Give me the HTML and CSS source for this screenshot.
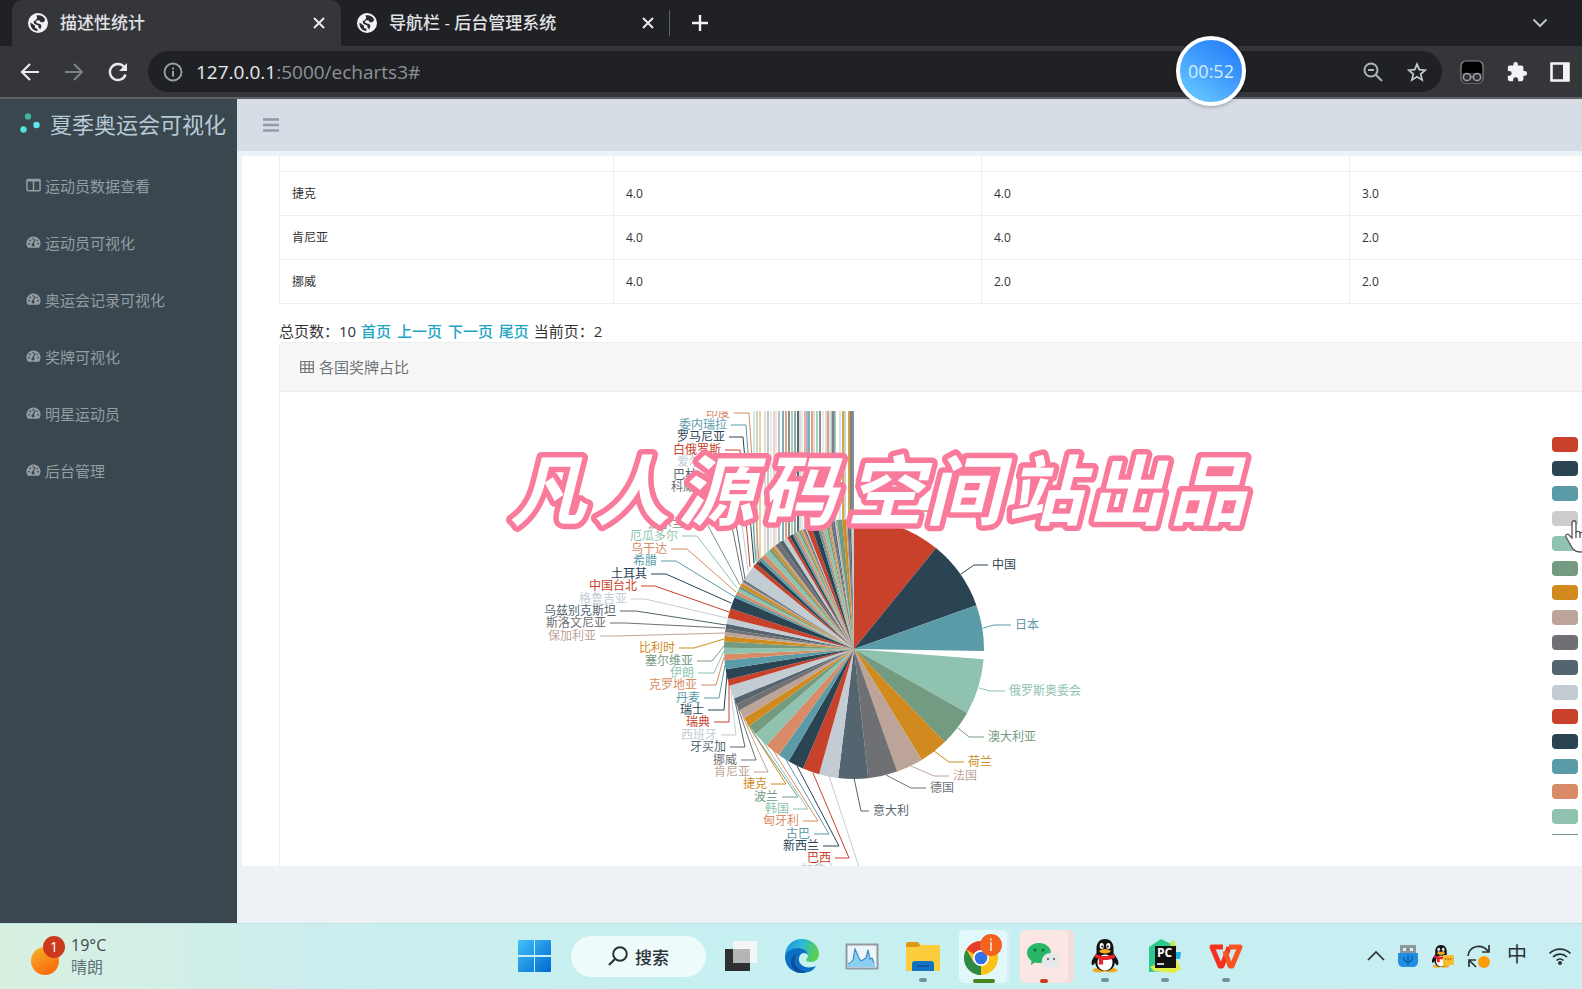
FILE: index.html
```
<!DOCTYPE html>
<html lang="zh-cn">
<head>
    <meta charset="UTF-8">
    <meta name="viewport" content="width=device-width, initial-scale=1.0">
    <title>描述性统计</title>
    <link rel="stylesheet" href="styles.css">
</head>
<body>
    <svg class="defs" width="0" height="0" aria-hidden="true">
        <symbol id="i-globe" viewBox="0 0 20 20">
            <circle cx="10" cy="10" r="10" fill="#f1f3f4"/>
            <path d="M2.5 9.5l4.500 3.200v2.300l2.400.8v2.400C5 17.700 1.800 14 2.500 9.500z" fill="#2b2c30"/>
            <path d="M8.500 2.500c4-1 7.500 1 8.800 4.500l-2 2.200h-2.500l-1.300-1.700-2.500-.3-1.300 1.800 2 1.500 2.600.5 1.200 2-1.300 3.500-1.700-2.300-.2-1.700-3.800-1.500-1-2.500 2.500-1.500 1.200-2.200z" fill="#2b2c30"/>
        </symbol>
        <symbol id="i-close" viewBox="0 0 12 12">
            <path d="M1 1l10 10M11 1L1 11" fill="none" stroke="#e8eaed" stroke-width="2"/>
        </symbol>
        <symbol id="i-dash" viewBox="0 0 16 14">
            <path d="M8 1a7.500 7.500 0 0 0-6.400 11.400c.2.400.5.600.9.600h11c.4 0 .7-.2.900-.6A7.500 7.500 0 0 0 8 1z" fill="currentColor"/>
            <path d="M7.300 9.500L9.800 4" stroke="#3a474f" stroke-width="1.200"/>
            <circle cx="7.500" cy="10" r="1.700" fill="#3a474f"/>
            <circle cx="3.200" cy="8.800" r=".9" fill="#3a474f"/>
            <circle cx="4.500" cy="5.300" r=".9" fill="#3a474f"/>
            <circle cx="7.700" cy="3.500" r=".9" fill="#3a474f"/>
            <circle cx="12.800" cy="8.800" r=".9" fill="#3a474f"/>
            <circle cx="11.800" cy="5.300" r=".8" fill="#3a474f"/>
        </symbol>
        <symbol id="i-qq" viewBox="0 0 30 36">
            <ellipse cx="9" cy="33" rx="7" ry="2.500" fill="#f5a91c"/>
            <ellipse cx="21" cy="33" rx="7" ry="2.500" fill="#f5a91c"/>
            <path d="M15 0c6 0 9 4.500 9 10v5c3 4 6 8 5 12-1 2-2.500 0-3.500-2C24.500 31 21 34 15 34S5.500 31 4.500 25C3.500 27 2 29 1 27c-1-4 2-8 5-12v-5c0-5.500 3-10 9-10z" fill="#111"/>
            <ellipse cx="15" cy="25" rx="8" ry="8.500" fill="#fff"/>
            <ellipse cx="11.500" cy="7.500" rx="2.200" ry="3.200" fill="#fff"/>
            <ellipse cx="18.500" cy="7.500" rx="2.200" ry="3.200" fill="#fff"/>
            <circle cx="12" cy="8" r="1" fill="#111"/>
            <circle cx="18" cy="8" r="1" fill="#111"/>
            <ellipse cx="15" cy="13" rx="6" ry="2.300" fill="#f5a91c"/>
            <path d="M5 15.500c6 3.500 14 3.500 20 0l1 4c-4 2-8 3-13 2.800V27H8.500v-6L4 19.500z" fill="#e5252b"/>
        </symbol>
    </svg>

    <div class="tabs">
        <div class="tab active">
            <svg class="favicon"><use href="#i-globe"/></svg>
            <span>描述性统计</span>
            <button class="close" aria-label="关闭"><svg width="12" height="12"><use href="#i-close"/></svg></button>
        </div>
        <div class="tab">
            <svg class="favicon"><use href="#i-globe"/></svg>
            <span>导航栏 - 后台管理系统</span>
            <button class="close" aria-label="关闭"><svg width="12" height="12"><use href="#i-close"/></svg></button>
        </div>
        <button class="new-tab" aria-label="新标签页">
            <svg width="16" height="16" viewBox="0 0 16 16"><path d="M8 0v16M0 8h16" stroke="#f1f3f4" stroke-width="2.400"/></svg>
        </button>
        <button class="tab-search" aria-label="搜索标签页">
            <svg width="16" height="10" viewBox="0 0 16 10"><path d="M1.500 1.500L8 8l6.500-6.500" fill="none" stroke="#bdc1c6" stroke-width="2"/></svg>
        </button>
    </div>

    <div class="toolbar">
        <button aria-label="后退">
            <svg width="20" height="20" viewBox="0 0 20 20"><path d="M19 10H2.500M10 2l-8 8 8 8" fill="none" stroke="#e8eaed" stroke-width="2.200"/></svg>
        </button>
        <button aria-label="前进">
            <svg width="20" height="20" viewBox="0 0 20 20"><path d="M1 10h16.500M10 2l8 8-8 8" fill="none" stroke="#7d8084" stroke-width="2"/></svg>
        </button>
        <button aria-label="刷新">
            <svg width="20" height="20" viewBox="0 0 20 20"><path d="M17.500 12.500A8 8 0 1 1 16 4.800" fill="none" stroke="#e8eaed" stroke-width="2.400"/><path d="M19 1v8h-8z" fill="#e8eaed"/></svg>
        </button>
        <div class="omnibox">
            <svg width="20" height="20" viewBox="0 0 20 20"><circle cx="10" cy="10" r="8.500" fill="none" stroke="#9aa0a6" stroke-width="1.800"/><path d="M10 9v5.500M10 5.500v2" stroke="#9aa0a6" stroke-width="2"/></svg>
            <p class="url"><b>127.0.0.1</b>:5000/echarts3#</p>
            <button aria-label="缩放">
                <svg width="20" height="20" viewBox="0 0 20 20"><circle cx="8" cy="8" r="6.500" fill="none" stroke="#b0b4b8" stroke-width="2"/><path d="M5 8h6M13 13l6 6" stroke="#b0b4b8" stroke-width="2"/></svg>
            </button>
            <button aria-label="收藏">
                <svg width="20" height="20" viewBox="0 0 20 20"><path d="M10 2.200l2.300 5.500 5.900.5-4.500 3.900 1.400 5.800-5.100-3.100-5.100 3.100 1.400-5.800L1.800 8.200l5.900-.5z" fill="none" stroke="#c4c7ca" stroke-width="1.800"/></svg>
            </button>
        </div>
        <div class="extensions">
            <button aria-label="扩展">
                <svg width="24" height="24" viewBox="0 0 24 24"><rect x="1" y="1" width="22" height="22" rx="5" fill="#000" stroke="#8c8e90" stroke-width="1.200"/><path d="M1.600 13h20.800v6a4 4 0 0 1-4 4H5.600a4 4 0 0 1-4-4z" fill="#303134"/><circle cx="7" cy="17" r="3.600" fill="none" stroke="#a0a2a4" stroke-width="1.500"/><circle cx="17" cy="17" r="3.600" fill="none" stroke="#a0a2a4" stroke-width="1.500"/><path d="M10.500 17h3" stroke="#a0a2a4"/></svg>
            </button>
            <button aria-label="扩展程序">
                <svg width="22" height="22" viewBox="0 0 24 24"><path d="M20.500 11H19V7a2 2 0 0 0-2-2h-4V3.500a2.500 2.500 0 0 0-5 0V5H4a2 2 0 0 0-2 2v3.800h1.500a2.700 2.700 0 0 1 0 5.400H2V20a2 2 0 0 0 2 2h3.800v-1.500a2.700 2.700 0 0 1 5.400 0V22H17a2 2 0 0 0 2-2v-4h1.500a2.500 2.500 0 0 0 0-5z" fill="#f1f3f4"/></svg>
            </button>
            <button aria-label="侧边栏">
                <svg width="20" height="20" viewBox="0 0 20 20"><path d="M1.500 1.500h17v17h-17z" fill="none" stroke="#f1f3f4" stroke-width="2.600"/><path d="M13 1h6v18h-6z" fill="#f1f3f4"/></svg>
            </button>
        </div>
        <div class="timer">00:52</div>
    </div>

    <div class="page">
        <nav class="sidebar">
            <a class="brand" href="#">
                <svg width="20" height="20" viewBox="0 0 20 20"><circle cx="8" cy="3.500" r="3.200" fill="#3fb59a"/><circle cx="16.500" cy="12" r="3.200" fill="#5fe6ee"/><circle cx="3.500" cy="16.500" r="3.200" fill="#4fe6d8"/></svg>
                <span>夏季奥运会可视化</span>
            </a>
            <a class="nav-item" href="#">
                <svg viewBox="0 0 16 14"><path d="M2 1h12a1 1 0 0 1 1 1v10a1 1 0 0 1-1 1H2a1 1 0 0 1-1-1V2a1 1 0 0 1 1-1zM8 1v12M1 2.500h14" fill="none" stroke="currentColor" stroke-width="1.600"/></svg>
                <span>运动员数据查看</span>
            </a>
            <a class="nav-item" href="#"><svg><use href="#i-dash"/></svg><span>运动员可视化</span></a>
            <a class="nav-item" href="#"><svg><use href="#i-dash"/></svg><span>奥运会记录可视化</span></a>
            <a class="nav-item" href="#"><svg><use href="#i-dash"/></svg><span>奖牌可视化</span></a>
            <a class="nav-item" href="#"><svg><use href="#i-dash"/></svg><span>明星运动员</span></a>
            <a class="nav-item" href="#"><svg><use href="#i-dash"/></svg><span>后台管理</span></a>
        </nav>

        <div class="main">
            <header class="topbar">
                <button aria-label="菜单">
                    <svg width="16" height="14" viewBox="0 0 16 14"><path d="M0 1.500h16M0 7h16M0 12.500h16" stroke="#8c9dab" stroke-width="2.600"/></svg>
                </button>
            </header>

            <div class="panel">
                <table>
                    <colgroup><col class="name"><col><col><col></colgroup>
                    <tr class="cut"><td></td><td></td><td></td><td></td></tr>
                    <tr><td>捷克</td><td>4.0</td><td>4.0</td><td>3.0</td></tr>
                    <tr><td>肯尼亚</td><td>4.0</td><td>4.0</td><td>2.0</td></tr>
                    <tr><td>挪威</td><td>4.0</td><td>2.0</td><td>2.0</td></tr>
                </table>

                <p class="pager">总页数：10 <a href="#">首页</a> <a href="#">上一页</a> <a href="#">下一页</a> <a href="#">尾页</a> 当前页：2</p>

                <div class="card">
                    <div class="card-header">
                        <svg width="14" height="14" viewBox="0 0 14 14"><path d="M.700 1.500h12.600v11H.700zM.700 5h12.600M.700 8.700h12.600M5 1.500v11M9.200 1.500v11" fill="none" stroke="#6f7479" stroke-width="1.200"/></svg>
                        <span>各国奖牌占比</span>
                    </div>
                    <div class="card-body">
                        <svg id="chart" class="chart"></svg>
                        <ul id="legend" class="legend"></ul>
                    </div>
                </div>
            </div>
        </div>

        <svg class="watermark" width="760" height="110">
            <text x="10 94 178 261 347 426 507 588 670" y="82">凡人源码空间站出品</text>
        </svg>
        <svg class="cursor" width="28" height="34" viewBox="0 0 28 34"><path d="M7 3c0-3 4-3 4 0v9c1-1 4-1 4 1 1-1 4-1 4 1 1-1 4-1 4 2v8c0 5-3 8-8 8-6 0-8-4-10-8l-4-7c-1-3 2-4 4-1l2 2z" fill="#fff" stroke="#555" stroke-width="1.300"/><path d="M11 12v6M15 13v5M19 14v4" stroke="#555" stroke-width="1.300"/></svg>
    </div>

    <footer class="taskbar">
        <div class="weather">
            <svg width="38" height="40" viewBox="0 0 38 40">
                <defs><linearGradient id="sun" x1="0" y1="0" x2="0.600" y2="1"><stop offset="0" stop-color="#f3b52a"/><stop offset="1" stop-color="#fb6a0c"/></linearGradient></defs>
                <circle cx="15" cy="25" r="14" fill="url(#sun)"/>
                <circle cx="24" cy="11" r="11" fill="#cc3a1c"/>
                <text x="24" y="16" text-anchor="middle" font-size="14" fill="#fff">1</text>
            </svg>
            <div>
                <div>19°C</div>
                <div class="sky">晴朗</div>
            </div>
        </div>

        <button class="start" aria-label="开始">
            <svg width="33" height="32" viewBox="0 0 33 32">
                <defs><linearGradient id="win" x1="0" y1="0" x2="1" y2="1" gradientUnits="objectBoundingBox"><stop offset="0" stop-color="#41c1fb"/><stop offset="1" stop-color="#0068cf"/></linearGradient></defs>
                <path d="M1 0h15v15H0V1a1 1 0 0 1 1-1zM17 0h15a1 1 0 0 1 1 1v14H17zM0 17h16v15H1a1 1 0 0 1-1-1zM17 17h16v14a1 1 0 0 1-1 1H17z" fill="url(#win)"/>
            </svg>
        </button>
        <button class="search">
            <svg width="20" height="20" viewBox="0 0 20 20"><circle cx="12" cy="8" r="6.800" fill="none" stroke="#2b3236" stroke-width="2"/><path d="M7 13l-6 6" stroke="#2b3236" stroke-width="2.200"/></svg>
            <span>搜索</span>
        </button>

        <div class="apps">
            <button class="app" aria-label="任务视图">
                <svg width="34" height="34" viewBox="0 0 34 34"><path d="M1 10h25v22H1z" fill="#2e2f31"/><path d="M9 2h24v22H9z" fill="#f4f6f6"/><path d="M9 10h17v14H9z" fill="#b3b5b6"/></svg>
            </button>
            <button class="app" aria-label="Edge">
                <svg width="34" height="34" viewBox="0 0 34 34">
                    <defs><linearGradient id="edge" x1="0" y1="0" x2="1" y2="0.300"><stop offset="0" stop-color="#1a8ddb"/><stop offset="0.500" stop-color="#2bb8d8"/><stop offset="1" stop-color="#58cf55"/></linearGradient></defs>
                    <path d="M0 18C0 7 7 0 17 0s17 7 17 15c0 5-4 8-8 8-3 0-5-1-5-2s2-2 2-5c0-4-4-7-9-7C8 9 2 12 0 18z" fill="url(#edge)"/>
                    <path d="M0 18C1 12 7 9 13 9c6 0 10 3 10 7-2-3-8-3-9 3-1 7 7 12 17 8-3 5-8 7-14 7C7 34 0 27 0 18z" fill="#0b6fc4"/>
                    <path d="M13 14c-7 6-3 17 8 19-3 1-7 1-10 0C4 27 4 17 13 14z" fill="#0d4f9c"/>
                </svg>
            </button>
            <button class="app" aria-label="监视器">
                <svg width="34" height="34" viewBox="0 0 34 34"><path d="M1.500 5.500h31v24h-31z" fill="#eef5f8" stroke="#8f9aa1" stroke-width="2"/><path d="M3 26c2-2 4-2 5-4l2-12 4 9 2 3 5-3 2-7 2 8 2-1 2 5 1 1v3H3z" fill="#8ccdf2"/><path d="M3 25c2-1 4-2 5-4l2-11 4 9 2 3 5-3 2-8 2 9 2-1 2 5" fill="none" stroke="#3a8fc9" stroke-width="1.200"/></svg>
            </button>
            <button class="app running" aria-label="文件资源管理器">
                <svg width="34" height="34" viewBox="0 0 34 34"><path d="M0 5a2 2 0 0 1 2-2h10l3 4v4H0z" fill="#dc9a12"/><path d="M0 8h12l3-2h17a2 2 0 0 1 2 2v24H0z" fill="#fbcd3c"/><path d="M6 32v-7a3 3 0 0 1 3-3h16a3 3 0 0 1 3 3v7z" fill="#1272c4"/><path d="M11 27h12" stroke="#0b4f92" stroke-width="1.500"/></svg>
            </button>
            <button class="app running current" aria-label="Chrome">
                <svg width="38" height="42" viewBox="0 0 38 42">
                    <circle cx="17" cy="25" r="17" fill="#fbc116"/>
                    <path d="M17 25L2.300 16.500A17 17 0 0 1 31.700 16.500H17z" fill="#e33e2b"/>
                    <path d="M17 25v17A17 17 0 0 1 2.300 16.500L9.500 29z" fill="#2c8a43"/>
                    <path d="M17 42l8-13-8-4z" fill="#fbc116"/>
                    <circle cx="17" cy="25" r="8" fill="#fff"/>
                    <circle cx="17" cy="25" r="6.300" fill="#2f72e6"/>
                    <circle cx="27" cy="12" r="11" fill="#f4621f"/>
                    <path d="M27 9v9M27 5.500v2" stroke="#ffd9c4" stroke-width="1.800"/>
                </svg>
            </button>
            <button class="app running alert" aria-label="微信">
                <svg width="34" height="34" viewBox="0 0 34 34"><path d="M12 3c7 0 12 4.500 12 10s-5 10-12 10c-1.500 0-3 0-4-.5L4 25l.5-4C2 19 0 16 0 13 0 7.500 5 3 12 3z" fill="#27b767"/><path d="M24 13c5 0 9 3.500 9 8 0 2-1 4-3 5.500l.5 3L27 28c-7 1.500-12-2-12-7s4-8 9-8z" fill="#e6e9ea"/><circle cx="8" cy="10" r="1.500" fill="#186a3c"/><circle cx="16" cy="10" r="1.500" fill="#186a3c"/><circle cx="21" cy="19" r="1.200" fill="#777"/><circle cx="27" cy="19" r="1.200" fill="#777"/></svg>
            </button>
            <button class="app running" aria-label="QQ"><svg width="30" height="34"><use href="#i-qq"/></svg></button>
            <button class="app running" aria-label="PyCharm">
                <svg width="34" height="34" viewBox="0 0 34 34"><path d="M1 8L13 0l10 5-5 27-17 1z" fill="#2cc98c"/><path d="M22 4l4-3 3 8-5 4z" fill="#c4e94b"/><path d="M26 13l7 0-1 7-6 0z" fill="#1fb1e8"/><path d="M27 17l6 13-7 4-20-2-4-4z" fill="#e2ed45"/><path d="M7 7h21v22H7z" fill="#111"/><text x="9" y="18" font-size="12" font-weight="700" fill="#fff">PC</text><path d="M9 25h7" stroke="#fff" stroke-width="1.600"/></svg>
            </button>
            <button class="app running" aria-label="WPS">
                <svg width="34" height="34" viewBox="0 0 34 34"><path d="M14 8H3l8 19h2l7-19" fill="none" stroke="#f5301f" stroke-width="5" stroke-linejoin="round"/><path d="M16 12l5 15h2l8-19H20" fill="none" stroke="#fa5420" stroke-width="5" stroke-linejoin="round"/></svg>
            </button>
        </div>

        <div class="tray">
            <svg width="18" height="12" viewBox="0 0 18 12"><path d="M1 10l8-8 8 8" fill="none" stroke="#2b3236" stroke-width="1.700"/></svg>
            <svg width="22" height="22" viewBox="0 0 22 22"><path d="M3 0h16v9H3z" fill="#8d979e"/><path d="M6 3h3v3H6zM13 3h3v3h-3z" fill="#e8ecee"/><path d="M1 8h20v8c0 4-2 6-6 6H7c-4 0-6-2-6-6z" fill="#1f8ee0"/><path d="M11 10v10M7 12v3l4 3 4-3v-4" fill="none" stroke="#0b5ea6" stroke-width="1.400"/></svg>
            <svg width="23" height="23" viewBox="0 0 23 23"><use href="#i-qq" width="20" height="23"/><path d="M12 10h10a1 1 0 0 1 1 1v8a1 1 0 0 1-1 1h-7l-3 2z" fill="#f7bd2c"/><path d="M14 14h7" stroke="#a8700a" stroke-width="1.500" stroke-dasharray="1.500 1"/></svg>
            <svg width="24" height="24" viewBox="0 0 24 24"><path d="M2 12C3 2 15-1 22 7M23 1v7h-7M3 23v-7h7M3 16l7 7" fill="none" stroke="#2b3236" stroke-width="1.700"/><circle cx="18" cy="18" r="6" fill="#fb9d0b"/></svg>
            <span class="ime">中</span>
            <svg width="24" height="20" viewBox="0 0 24 20"><path d="M1.500 7.500a15 15 0 0 1 21 0M5 11a10 10 0 0 1 14 0M8.500 14.500a5 5 0 0 1 7 0" fill="none" stroke="#2b3236" stroke-width="1.700"/><circle cx="12" cy="17" r="2" fill="#2b3236"/></svg>
        </div>
    </footer>

    <script src="chart.js"></script>
</body>
</html>
```
FILE: styles.css
```
:root {
    --chrome-dark: #202124;
    --chrome: #35363a;
    --sidebar: #3a474f;
    --page-bg: #ecf2f5;
    --line: #eceeef;
    --link: #1fa5c3;
}

* {
    margin: 0;
    padding: 0;
    box-sizing: border-box;
}

body {
    height: 100vh;
    overflow: hidden;
    display: flex;
    flex-direction: column;
    font-family: 'Open Sans', 'Noto Sans CJK SC', sans-serif;
    color: #333;
    background: var(--page-bg);
}

button {
    border: none;
    background: none;
    font: inherit;
    color: inherit;
    display: flex;
    align-items: center;
    justify-content: center;
    flex-shrink: 0;
}

a {
    color: inherit;
    text-decoration: none;
}

svg {
    flex-shrink: 0;
}

.defs {
    position: absolute;
}

/* browser */
.tabs {
    height: 46px;
    flex-shrink: 0;
    padding: 0 34px 0 12px;
    display: flex;
    align-items: center;
    background: var(--chrome-dark);
    color: #e0e2e5;
    font-size: 17px;
    font-weight: 500;
}

.tab {
    width: 329px;
    height: 46px;
    padding: 0 16px;
    display: flex;
    align-items: center;
    gap: 12px;
    white-space: nowrap;
}

.tab span {
    padding-bottom: 3px;
}

.tab.active {
    background: var(--chrome);
    border-radius: 10px 10px 0 0;
}

.tab:not(.active) {
    background: linear-gradient(#5f6368, #5f6368) right center / 1px 26px no-repeat;
}

.favicon {
    width: 20px;
    height: 20px;
}

.close {
    margin-left: auto;
}

.new-tab {
    width: 60px;
    height: 46px;
}

.tab-search {
    margin-left: auto;
}

.toolbar {
    height: 53px;
    flex-shrink: 0;
    padding: 0 12px 0 20px;
    display: flex;
    align-items: center;
    gap: 24px;
    position: relative;
    background: var(--chrome);
    border-bottom: 2px solid #5c5f64;
}

.omnibox {
    flex: 1;
    height: 41px;
    margin-left: -4px;
    padding: 0 15px;
    display: flex;
    align-items: center;
    gap: 24px;
    border-radius: 21px;
    background: var(--chrome-dark);
}

.url {
    flex: 1;
    margin-left: -11px;
    font-size: 19px;
    color: #8f9398;
}

.url b {
    font-weight: 400;
    color: #e8eaed;
}

.extensions {
    display: flex;
    align-items: center;
    gap: 22px;
    margin-left: -6px;
}

.timer {
    position: absolute;
    left: 1176px;
    top: -10px;
    z-index: 2;
    width: 70px;
    height: 70px;
    border: 4px solid #fff;
    border-radius: 50%;
    display: flex;
    align-items: center;
    justify-content: center;
    font-size: 18px;
    color: #d6ecfb;
    background: linear-gradient(35deg, #64c8ff 10%, #459ffc 50%, #2480fb 90%);
    box-shadow: 0 1px 4px rgba(0, 0, 0, 0.3);
}

/* page */
.page {
    flex: 1;
    min-height: 0;
    display: flex;
    position: relative;
    overflow: hidden;
}

.sidebar {
    width: 237px;
    flex-shrink: 0;
    background: var(--sidebar);
    color: #929da4;
}

.brand {
    height: 53px;
    padding: 0 0 4px 20px;
    display: flex;
    align-items: center;
    gap: 10px;
    font-size: 22px;
    color: #b9cad6;
    white-space: nowrap;
    border-bottom: 1px solid #35434e;
}

.nav-item {
    height: 57px;
    padding: 10px 0 0 26px;
    display: flex;
    align-items: center;
    gap: 4px;
    font-size: 15px;
    border-bottom: 1px solid #35434e;
}

.nav-item svg {
    width: 15px;
    height: 14px;
}

.main {
    flex: 1;
    min-width: 0;
    display: flex;
    flex-direction: column;
}

.topbar {
    height: 52px;
    flex-shrink: 0;
    padding-left: 26px;
    display: flex;
    align-items: center;
    background: #d6dde4;
}

.panel {
    flex: 1;
    min-height: 0;
    overflow: hidden;
    margin: 5px 0 57px 5px;
    padding-left: 37px;
    background: #fff;
}

table {
    width: calc(100% + 136px);
    table-layout: fixed;
    border-collapse: collapse;
    font-size: 12px;
}

.name {
    width: 334px;
}

td {
    height: 44px;
    padding: 0 12px;
    border: 1px solid var(--line);
}

.cut td {
    height: 15px;
    border-top: none;
}

.pager {
    margin-top: 16px;
    font-size: 15px;
    line-height: 22px;
}

.pager a {
    margin: 0 1px;
    color: var(--link);
    font-weight: 500;
}

.card {
    border: 1px solid var(--line);
    border-right: none;
    border-radius: 4px 0 0 0;
}

.card-header {
    height: 49px;
    padding-left: 20px;
    display: flex;
    align-items: center;
    gap: 5px;
    font-size: 15px;
    color: #6f7479;
    background: #f7f7f7;
    border-bottom: 1px solid var(--line);
}

.card-body {
    display: flex;
    align-items: flex-start;
    padding: 19px 4px 0 0;
}

.chart {
    flex: 1;
    min-width: 0;
    height: 480px;
    font-size: 12px;
}

.legend {
    width: 26px;
    height: 398px;
    margin-top: 26px;
    list-style: none;
    display: flex;
    flex-direction: column;
    justify-content: space-between;
}

.swatch {
    width: 26px;
    height: 15px;
    border-radius: 4px;
}

.swatch.cut {
    height: 1px;
}

.watermark {
    position: absolute;
    left: 500px;
    top: 338px;
    font-size: 76px;
    font-weight: 700;
    font-style: italic;
    fill: #fff;
    stroke: #fa7a9c;
    stroke-width: 11px;
    stroke-linejoin: round;
    paint-order: stroke;
}

.cursor {
    position: absolute;
    right: -11px;
    top: 421px;
}

/* taskbar */
.taskbar {
    height: 66px;
    flex-shrink: 0;
    display: flex;
    align-items: center;
    background: linear-gradient(90deg, #d8f0e0, #cceeee 20%, #c6f0f1 45%, #c8eef2);
    box-shadow: inset 0 1px 0 #bcdfe2;
    color: #3c4a4e;
}

.weather {
    width: 518px;
    padding-left: 30px;
    display: flex;
    align-items: center;
    gap: 3px;
    font-size: 16px;
    line-height: 22px;
}

.sky {
    color: #5f7377;
}

.search {
    width: 135px;
    height: 41px;
    margin-left: 20px;
    gap: 7px;
    border-radius: 21px;
    background: #eefbfa;
    font-size: 17px;
    font-weight: 500;
    color: #2b3236;
}

.apps {
    width: 545px;
    height: 66px;
    margin-left: 5px;
    display: grid;
    grid-template-columns: repeat(9, 1fr);
    justify-items: center;
}

.app {
    position: relative;
    width: 48px;
    height: 66px;
}

.running::after {
    content: '';
    position: absolute;
    left: 20px;
    bottom: 7px;
    width: 8px;
    height: 4px;
    border-radius: 2px;
    background: #74909a;
}

.current,
.alert {
    height: 53px;
    margin-top: 7px;
    border-radius: 5px;
    background: #e2f8fa;
    box-shadow: 3px 0 0 #d5f1f3;
}

.current svg {
    margin-bottom: 6px;
}

.current::after {
    left: 14px;
    bottom: 0;
    width: 22px;
    background: #4a8420;
}

.alert {
    background: #fbe6e4;
    box-shadow: 6px 0 0 #f3dcdc;
}

.alert::after {
    bottom: 0;
    background: #cc3c1d;
}

.tray {
    margin-left: auto;
    padding-right: 10px;
    display: flex;
    align-items: center;
    gap: 12px;
}

.ime {
    width: 22px;
    margin: 0 8px 0 4px;
    text-align: center;
    font-size: 20px;
    line-height: 24px;
    padding-bottom: 2px;
    color: #2b3236;
}
```
FILE: chart.js
```
var NS = 'http://www.w3.org/2000/svg';
var palette = ['#c8412b', '#2b4454', '#5b9ba8', '#d88b66', '#8fc3af', '#739b81',
    '#d08a1e', '#bda498', '#6e7074', '#546570', '#c4ccd3'];
var cx = 574, cy = 238, r = 130;

// end angle of every slice, clockwise from the top
var ends = [39.1, 70.3, 90.9, 94.5, 119.5, 135.7, 148.6, 160.6, 173.7, 187, 195.6,
    203.1, 210.2, 215.3, 222.2, 229.2, 233.7, 237.8, 241.9, 244.9, 247.6, 253.6,
    256.4, 261, 265, 267.7, 270.5, 273.3, 275.7, 277.5, 279, 281.2, 283.9,
    288.1, 293.3, 294.8, 296.2, 297.6, 298.9, 300.4, 301, 301.6, 302.2, 309.2,
    311.2, 313.2, 314.8, 316.8, 319.2, 320.6, 321.8, 322.8, 325, 327, 329,
    330.3, 331.8, 332.8, 333.8, 334.8, 335.6, 336.3, 337, 337.5, 338, 338.5,
    340.8, 343.4, 344.6, 345.6, 347.4, 348.2, 348.8, 349.6, 350.6, 351.4, 352,
    352.1, 352.2, 352.3, 352.4, 352.5, 354.8, 356.4, 357, 358, 358.8, 360];
var hidden = 3;

// name, colour, text edge, y, elbow x, x and y on the pie
var left = [
    ['印度', 3, 450, 2, 469, 479, 152],
    ['委内瑞拉', 2, 447, 14, 466, 476, 150],
    ['罗马尼亚', 1, 445, 26, 463, 474, 152],
    ['白俄罗斯', 0, 441, 39, 460, 470, 156],
    ['爱尔兰', 10, 433, 51, 454, 468, 160],
    ['巴林', 9, 417, 64, 448, 465, 168],
    ['科威特', 8, 427, 76, 444, 463, 170],
    ['爱尔兰', 5, 404, 113, 427, 460, 174],
    ['厄瓜多尔', 4, 398, 125, 417, 457, 177],
    ['乌干达', 3, 387, 138, 407, 456, 181],
    ['希腊', 2, 377, 150, 396, 455, 186],
    ['土耳其', 1, 367, 163, 386, 451, 192],
    ['中国台北', 0, 357, 175, 375, 449, 201],
    ['格鲁吉亚', 10, 347, 188, 365, 447, 207],
    ['乌兹别克斯坦', 9, 336, 200, 356, 446, 214],
    ['斯洛文尼亚', 8, 326, 212, 346, 445, 217],
    ['保加利亚', 7, 316, 225, 336, 445, 222],
    ['比利时', 6, 395, 237, 414, 444, 228],
    ['塞尔维亚', 5, 413, 250, 432, 444, 235],
    ['伊朗', 4, 414, 262, 434, 444, 240],
    ['克罗地亚', 3, 417, 274, 436, 444, 246],
    ['丹麦', 2, 420, 287, 439, 445, 254],
    ['瑞士', 1, 424, 299, 444, 447, 263],
    ['瑞典', 0, 430, 311, 449, 449, 272],
    ['西班牙', 10, 437, 324, 456, 451, 281],
    ['牙买加', 9, 446, 336, 465, 455, 290],
    ['挪威', 8, 457, 349, 476, 458, 297],
    ['肯尼亚', 7, 470, 361, 488, 462, 304],
    ['捷克', 6, 487, 373, 506, 467, 312],
    ['波兰', 5, 498, 386, 518, 472, 320],
    ['韩国', 4, 509, 398, 528, 482, 329],
    ['匈牙利', 3, 519, 410, 538, 493, 339],
    ['古巴', 2, 530, 423, 549, 505, 347],
    ['新西兰', 1, 539, 435, 559, 517, 355],
    ['巴西', 0, 551, 447, 569, 533, 362],
    ['加拿大', 10, 557, 459, 580, 549, 365]
];
var right = [
    ['', 0, 652, 100, 640, 618, 116],
    ['中国', 1, 712, 154, 694, 681, 163],
    ['日本', 2, 735, 214, 714, 703, 217],
    ['俄罗斯奥委会', 4, 729, 280, 710, 699, 277],
    ['澳大利亚', 5, 708, 326, 689, 678, 317],
    ['荷兰', 6, 688, 351, 669, 654, 340],
    ['法国', 7, 673, 365, 654, 631, 355],
    ['德国', 8, 650, 377, 631, 606, 364],
    ['意大利', 9, 593, 400, 581, 574, 367]
];

// label lines that leave the chart at the top: x, width, colour
var risers = [
    [474, 1, 4], [477, 1, 5], [480, 1, 6], [485, 1, 7], [488, 1, 8], [491, 1, 10],
    [494, 1, 3], [496, 1, 10], [499, 1, 9], [503, 2, 2], [506, 2, 3], [509, 2, 8],
    [512, 2, 4], [515, 2, 5], [518, 2, 1], [520, 1, 7], [522, 1, 10], [525, 1, 0],
    [527, 1, 1], [529, 2, 2], [532, 2, 3], [534, 1, 7], [537, 2, 4], [540, 2, 8],
    [543, 1, 10], [546, 1, 7], [548, 2, 3], [550, 1, 4], [553, 3, 9], [555, 1, 8],
    [560, 1, 4], [563, 2, 6], [565, 1, 5], [569, 2, 6], [571, 2, 9], [573, 2, 8]
];

var svg = document.getElementById('chart');

function add(tag, attrs, text) {
    var el = document.createElementNS(NS, tag);
    for (var k in attrs) el.setAttribute(k, attrs[k]);
    if (text) el.textContent = text;
    svg.appendChild(el);
}

function point(deg) {
    var a = deg * Math.PI / 180;
    return (cx + r * Math.sin(a)).toFixed(2) + ' ' + (cy - r * Math.cos(a)).toFixed(2);
}

risers.forEach(function (l) {
    var dx = l[0] - cx;
    var y = cy - Math.sqrt(r * r - dx * dx);
    add('path', {
        d: 'M' + l[0] + ' 0V' + y.toFixed(1),
        stroke: palette[l[2]],
        'stroke-width': l[1],
        'stroke-opacity': 0.8
    });
});

var start = 0;
ends.forEach(function (end, i) {
    if (i !== hidden) {
        add('path', {
            d: 'M' + cx + ' ' + cy + 'L' + point(start) + 'A' + r + ' ' + r + ' 0 0 1 ' + point(end) + 'Z',
            fill: palette[i % palette.length]
        });
    }
    start = end;
});

function label(item, side) {
    var color = palette[item[1]];
    var x = item[2], y = item[3];
    add('path', {
        d: 'M' + (x - side * 4) + ' ' + y + 'H' + item[4] + 'L' + item[5] + ' ' + item[6],
        fill: 'none',
        stroke: color
    });
    if (item[0]) {
        add('text', { x: x, y: y + 4, fill: color, 'text-anchor': side > 0 ? 'start' : 'end' }, item[0]);
    }
}

left.forEach(function (item) { label(item, -1); });
right.forEach(function (item) { label(item, 1); });

var legend = document.getElementById('legend');
for (var i = 0; i < 17; i++) {
    var li = document.createElement('li');
    var btn = document.createElement('button');
    btn.className = i === 16 ? 'swatch cut' : 'swatch';
    btn.style.background = i === hidden ? '#ccc' : palette[i % palette.length];
    btn.setAttribute('aria-label', '图例 ' + (i + 1));
    li.appendChild(btn);
    legend.appendChild(li);
}
```
